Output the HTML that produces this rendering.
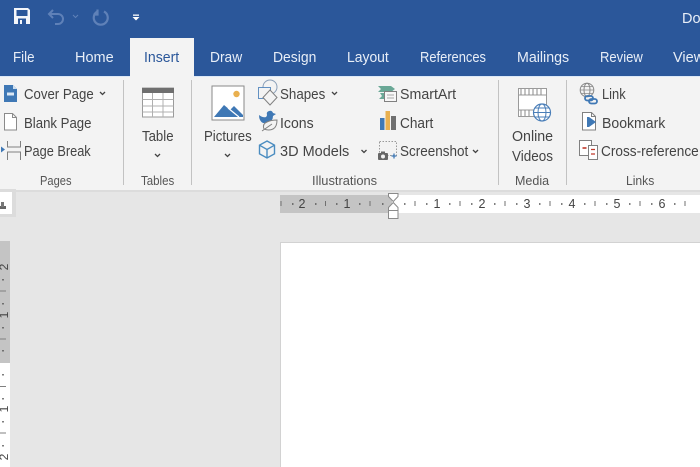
<!DOCTYPE html>
<html><head><meta charset="utf-8">
<style>
html,body{margin:0;padding:0}
body{width:700px;height:467px;overflow:hidden;position:relative;background:#e6e6e6;font-family:"Liberation Sans",sans-serif;}
#w{position:absolute;left:0;top:0;width:700px;height:467px;overflow:hidden;filter:blur(.3px)}
.a{position:absolute}
.t{position:absolute;white-space:nowrap;line-height:18px;height:18px;transform-origin:0 50%}
.tab{color:#e8eef7;font-size:14.5px;top:49px}
.r{color:#444;font-size:14.5px}
.g{color:#555;font-size:12.5px;top:172px}
.sep{position:absolute;top:80px;height:105px;width:1px;background:#c2c2c2}
svg{position:absolute;overflow:visible}
.n{position:absolute;top:197px;font-size:12.5px;line-height:14px;color:#444;width:10px;text-align:center}
.v{left:-3px;font-size:12px;color:#444;line-height:14px;height:14px;width:14px;text-align:center;transform:rotate(-90deg);transform-origin:50% 50%}
</style></head><body>
<div id="w">
<div class="a" style="left:0;top:0;width:700px;height:76px;background:#2b579a"></div>
<div class="a" style="left:0;top:76px;width:700px;height:115px;background:#f3f3f3"></div>
<div class="a" style="left:0;top:76px;width:700px;height:1px;background:#dbe8f7"></div>
<div class="a" style="left:0;top:190px;width:700px;height:2px;background:#dcdcdc"></div>
<div class="a" style="left:130px;top:38px;width:64px;height:39px;background:#f3f3f3"></div>

<svg style="left:0;top:0" width="160" height="36">
<path d="M14 8h14l2 2v14H14z" fill="#f4f6fa"/><rect x="16.500" y="10" width="11" height="6" fill="#2b579a"/><rect x="18" y="18.500" width="8" height="5.500" fill="#2b579a"/><rect x="20" y="20" width="2" height="4" fill="#f4f6fa"/>
<path d="M53 10l-4 4 4 4M49 14h9a5 5 0 0 1 0 10h-3" fill="none" stroke="#5f81b8" stroke-width="2"/>
<path d="M73 15l2.500 2.500 2.500-2.500" fill="none" stroke="#5f81b8" stroke-width="1"/>
<path d="M104 11.500a7 7 0 1 1-6.500 0M97.500 9.500v5h-4" fill="none" stroke="#5f81b8" stroke-width="2.200"/>
<rect x="133" y="14.500" width="6" height="1.300" fill="#fff"/><path d="M132.500 17h7l-3.500 3.500z" fill="#fff"/>
</svg>
<div class="t" style="left:682px;top:10px;color:#e8eef7;font-size:14.500px">Do</div>

<div class="t tab" style="left:13px;transform:scaleX(.92)">File</div>
<div class="t tab" style="left:75px">Home</div>
<div class="t tab" style="left:144px;color:#2b579a;transform:scaleX(.97)">Insert</div>
<div class="t tab" style="left:210px;transform:scaleX(.95)">Draw</div>
<div class="t tab" style="left:273px;transform:scaleX(.96)">Design</div>
<div class="t tab" style="left:347px;transform:scaleX(.96)">Layout</div>
<div class="t tab" style="left:420px;transform:scaleX(.89)">References</div>
<div class="t tab" style="left:517px;transform:scaleX(.98)">Mailings</div>
<div class="t tab" style="left:600px;transform:scaleX(.9)">Review</div>
<div class="t tab" style="left:673px">View</div>

<div class="sep" style="left:123px"></div>
<div class="sep" style="left:191px"></div>
<div class="sep" style="left:498px"></div>
<div class="sep" style="left:566px"></div>

<svg style="left:0;top:76px" width="700" height="115">
<!-- cover page -->
<path d="M4 9h9l4 4v13H4z" fill="#3f78b5"/><path d="M13 9l4 4h-4z" fill="#cfe0f0"/><rect x="7" y="16.500" width="7" height="3" fill="#dce8f4"/>
<!-- blank page -->
<path d="M4.500 37.500h8l4 4v12.500h-12z" fill="#fff" stroke="#8a8a8a"/><path d="M12.500 37.500v4h4" fill="none" stroke="#8a8a8a"/>
<!-- page break -->
<path d="M7.500 65v6h13v-6M7.500 84v-8h13v8" fill="#f3f3f3" stroke="#808080"/><path d="M1 70.500l4 3-4 3z" fill="#3f78b5"/>
<path d="M99.500 91.500" fill="none"/>
<path d="M100 16l2.500 2.500 2.500-2.500" fill="none" stroke="#444" stroke-width="1.300"/>
<!-- table -->
<rect x="142.500" y="12" width="31" height="29" fill="#fff" stroke="#9a9a9a"/><rect x="142" y="12" width="32" height="5" fill="#6f6f6f"/>
<path d="M142.500 23.500h31M142.500 30h31M142.500 36h31M152.500 17v24M163 17v24" stroke="#b0b0b0" fill="none"/>
<path d="M155 78l2.500 2.500 2.500-2.500" fill="none" stroke="#444" stroke-width="1.300"/>
<!-- pictures -->
<rect x="212" y="10" width="32" height="34" fill="#fff" stroke="#8a8a8a"/>
<circle cx="236.500" cy="18" r="3.200" fill="#e9b04f"/>
<path d="M214 41l10-12 6 5 4-4 9 9v2z" fill="#3f78b5"/><path d="M228 32l11 9" stroke="#fff" stroke-width="1.200"/>
<path d="M225 78l2.500 2.500 2.500-2.500" fill="none" stroke="#444" stroke-width="1.300"/>
<!-- shapes -->
<circle cx="270" cy="11" r="7" fill="#f3f3f3" stroke="#8a9fb8"/><path d="M258.500 11.500h12v11h-12z" fill="#f3f3f3" stroke="#3f78b5" stroke-opacity=".8"/><path d="M270 14l7 7.500-7 7.500-7-7.500z" fill="#f3f3f3" stroke="#808080"/>
<path d="M332 16l2.500 2.500 2.500-2.500" fill="none" stroke="#444" stroke-width="1.300"/>
<!-- icons -->
<path d="M259 39q4 3 7 2 1-1 1-2-1-3 2-4 3-1 4 2l3 1-3 2q0 5-5 7h-5q-4-2-4-8z" fill="#3f78b5"/><path d="M264 53q-2-5 3-7 4-2 10-2 0 7-4 9-4 2-9 0z" fill="#f3f3f3" stroke="#808080"/><path d="M262 55l10-7" stroke="#808080"/>
<!-- 3d -->
<path d="M267 65l7.500 4.200v8.600L267 82l-7.500-4.200v-8.600zM259.500 69.200l7.500 4.300 7.500-4.300M267 73.500V82" fill="none" stroke="#4a8cc0" stroke-width="1.400"/>
<path d="M361.500 74l2.500 2.500 2.500-2.500" fill="none" stroke="#444" stroke-width="1.300"/>
<!-- smartart -->
<path d="M378 10h13l4 3-4 3h-13l3-3zM380 17h8l-1 6h-8l3-3z" fill="#6aa896"/><rect x="384.500" y="15.500" width="12" height="10" fill="#f7f7f7" stroke="#808080"/><path d="M387 19h7M387 22h7" stroke="#aaa"/>
<!-- chart -->
<rect x="380" y="42" width="4.500" height="12" fill="#3f78b5"/><rect x="385.500" y="35" width="4.500" height="19" fill="#e8b050"/><rect x="391" y="40" width="5" height="14" fill="#6f6f6f"/>
<!-- screenshot -->
<rect x="379.500" y="65.500" width="17" height="14" fill="none" stroke="#999" stroke-dasharray="1.500 1.500"/>
<rect x="378" y="77" width="10" height="7" rx="1" fill="#666"/><rect x="381" y="75.500" width="4" height="2" fill="#666"/><circle cx="383" cy="80.500" r="2" fill="#f3f3f3"/>
<path d="M391.500 80h5M394 77.500v5" stroke="#3f78b5" stroke-width="1.300"/>
<path d="M473 74l2.500 2.500 2.500-2.500" fill="none" stroke="#444" stroke-width="1.300"/>
<!-- videos -->
<rect x="518.500" y="12.500" width="28" height="28" fill="#fff" stroke="#9a9a9a"/>
<path d="M518.500 19h28M518.500 34h28" stroke="#9a9a9a"/>
<path d="M521 13v6M525 13v6M529 13v6M533 13v6M537 13v6M541 13v6M521 34v6M525 34v6M529 34v6" stroke="#8a8a8a"/>
<circle cx="542" cy="36.500" r="8.500" fill="#fff" stroke="#4a7eb8" stroke-width="1.200"/><ellipse cx="542" cy="36.500" rx="4" ry="8.500" fill="none" stroke="#4a7eb8"/><path d="M533.500 36.500h17M535 32h14M535 41h14" stroke="#4a7eb8"/>
<!-- link -->
<circle cx="587" cy="14" r="6.800" fill="#f3f3f3" stroke="#888"/><ellipse cx="587" cy="14" rx="3" ry="6.800" fill="none" stroke="#888"/><path d="M580.500 14h13M581.500 10.500h11M581.500 17.500h11" stroke="#888" stroke-width=".8"/>
<rect x="585" y="20" width="8" height="4.500" rx="2.200" fill="none" stroke="#3f78b5" stroke-width="1.800"/><rect x="589" y="23" width="8" height="4.500" rx="2.200" fill="none" stroke="#3f78b5" stroke-width="1.800"/>
<!-- bookmark -->
<path d="M582.500 36.500h9l4 4v13.500h-13z" fill="#fff" stroke="#808080"/><path d="M591.500 36.500v4h4" fill="none" stroke="#808080"/><path d="M587 41h2l7 5-7 5h-2z" fill="#3f78b5"/>
<!-- cross ref -->
<rect x="579.500" y="64.500" width="12" height="15" fill="#fff" stroke="#808080"/><path d="M582.500 72h4" stroke="#c0392b" stroke-width="1.600"/>
<rect x="588.500" y="69.500" width="9" height="14" fill="#fff" stroke="#808080"/><path d="M591 73.500h4M591 78h4" stroke="#c0392b" stroke-width="1.300"/>
</svg>

<div class="t r" style="left:24px;top:86px;transform:scaleX(.91)">Cover Page</div>
<div class="t r" style="left:24px;top:115px;transform:scaleX(.91)">Blank Page</div>
<div class="t r" style="left:24px;top:143px;transform:scaleX(.88)">Page Break</div>
<div class="t g" style="left:40px;transform:scaleX(.89)">Pages</div>
<div class="t r" style="left:142px;top:128px;transform:scaleX(.91)">Table</div>
<div class="t g" style="left:141px;transform:scaleX(.92)">Tables</div>
<div class="t r" style="left:204px;top:128px;transform:scaleX(.91)">Pictures</div>
<div class="t r" style="left:280px;top:86px;transform:scaleX(.92)">Shapes</div>
<div class="t r" style="left:280px;top:115px;transform:scaleX(.97)">Icons</div>
<div class="t r" style="left:280px;top:143px">3D Models</div>
<div class="t g" style="left:312px;transform:scaleX(1.03)">Illustrations</div>
<div class="t r" style="left:400px;top:86px;transform:scaleX(.98)">SmartArt</div>
<div class="t r" style="left:400px;top:115px;transform:scaleX(.94)">Chart</div>
<div class="t r" style="left:400px;top:143px;transform:scaleX(.93)">Screenshot</div>
<div class="t r" style="left:512px;top:128px;transform:scaleX(.98)">Online</div>
<div class="t r" style="left:512px;top:148px;transform:scaleX(.93)">Videos</div>
<div class="t g" style="left:515px">Media</div>
<div class="t r" style="left:602px;top:86px;transform:scaleX(.89)">Link</div>
<div class="t r" style="left:602px;top:115px;transform:scaleX(.97)">Bookmark</div>
<div class="t r" style="left:601px;top:143px;transform:scaleX(.94)">Cross-reference</div>
<div class="t g" style="left:626px;transform:scaleX(.97)">Links</div>

<!-- corner -->
<div class="a" style="left:0;top:189px;width:16px;height:28px;background:#dcdcdc"></div>
<div class="a" style="left:0;top:192px;width:12px;height:22px;background:#fff"></div>
<div class="a" style="left:0;top:206px;width:6px;height:3px;background:#666"></div>
<div class="a" style="left:1px;top:202px;width:3px;height:5px;background:#777"></div>

<!-- h ruler -->
<div class="a" style="left:280px;top:195px;width:112px;height:18px;background:#c4c4c4"></div>
<div class="a" style="left:392px;top:195px;width:308px;height:18px;background:#fff"></div>
<svg style="left:280px;top:195px" width="420" height="18">
<path d="M1 6v5M45.500 6v5M90 6v5M135 6v5M180 6v5M225 6v5M270 6v5M315 6v5M360 6v5M405 6v5" stroke="#707070"/>
<path d="M12 9h1.500M35 9h1.500M56 9h1.500M79 9h1.500M102 9h1.500M124 9h1.500M146 9h1.500M169 9h1.500M191 9h1.500M214 9h1.500M236 9h1.500M259 9h1.500M281 9h1.500M304 9h1.500M326 9h1.500M349 9h1.500M371 9h1.500M394 9h1.500" stroke="#555" stroke-width="1.500"/>
</svg>
<div class="n" style="left:297px">2</div>
<div class="n" style="left:342px">1</div>
<div class="n" style="left:432px">1</div>
<div class="n" style="left:477px">2</div>
<div class="n" style="left:522px">3</div>
<div class="n" style="left:567px">4</div>
<div class="n" style="left:612px">5</div>
<div class="n" style="left:657px">6</div>
<svg style="left:388px;top:192px" width="12" height="30">
<path d="M.500 1.500h9.500v3l-4.750 5-4.750-5z" fill="#fff" stroke="#8a8a8a"/>
<path d="M5.250 10.500l4.750 5v3h-9.500v-3z" fill="#fff" stroke="#8a8a8a"/>
<rect x=".5" y="18.500" width="9.500" height="8" fill="#fff" stroke="#8a8a8a"/>
</svg>

<!-- page -->
<div class="a" style="left:281px;top:243px;width:419px;height:224px;background:#fff;box-shadow:0 0 0 1px #d2d2d2"></div>

<!-- v ruler -->
<div class="a" style="left:0;top:241px;width:10px;height:122px;background:#c4c4c4"></div>
<div class="a" style="left:0;top:363px;width:10px;height:104px;background:#fff"></div>
<svg style="left:0;top:241px" width="10" height="226">
<path d="M0 50h6M0 98h6M0 145.500h6M0 192h6" stroke="#808080"/>
<path d="M3 38v1.500M3 62v1.500M3 86v1.500M3 109v1.500M3 133v1.500M3 157v1.500M3 180v1.500M3 204v1.500" stroke="#555" stroke-width="1.500"/>
</svg>
<div class="t v" style="top:260px">2</div>
<div class="t v" style="top:308px">1</div>
<div class="t v" style="top:402px">1</div>
<div class="t v" style="top:450px">2</div>
</div>
</body></html>
